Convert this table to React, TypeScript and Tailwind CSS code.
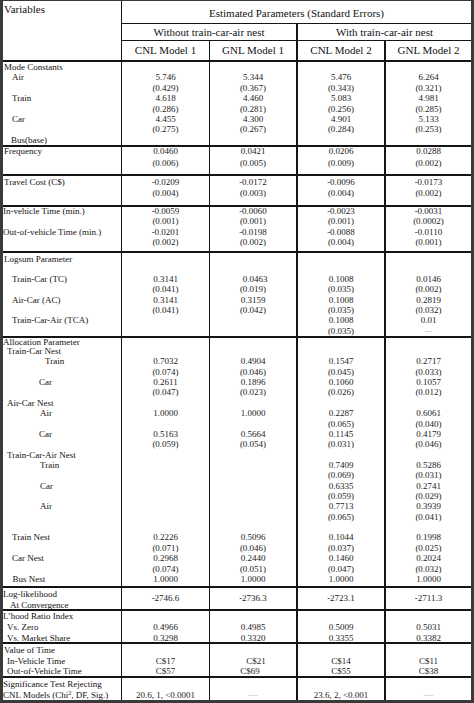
import React from "react";

type R = { h?: string; l?: React.ReactNode; i?: string; v?: React.ReactNode[] };

const cols = "grid grid-cols-[119px_88px_88px_88px_85px]";
const colBorders = [
  "border-r border-[#151515]",
  "border-r border-[#151515]",
  "border-r-2 border-[#151515]",
  "border-r-2 border-[#151515]",
  "",
];

const dash = <span className="text-[#9a9a9a] text-[7px]">----</span>;
const dash3 = <span className="text-[#9a9a9a] text-[7px]">---</span>;

function Section({
  rows,
  h,
  d = "h-[10.4px]",
  top = true,
  mid,
}: {
  rows: R[];
  h: string;
  d?: string;
  top?: boolean;
  mid?: React.ReactNode[];
}) {
  return (
    <div className={`${cols} ${h} ${top ? "border-t-2 border-[#151515]" : ""}`}>
      {[0, 1, 2, 3, 4].map((c) => (
        <div
          key={c}
          className={`${colBorders[c]} flex flex-col overflow-hidden ${mid && c > 0 ? "justify-center" : ""}`}
        >
          {mid && c > 0 ? (
            <div className="text-center text-[#222]">{mid[c - 1]}</div>
          ) : (
            rows.map((r, k) => (
              <div
                key={k}
                className={`${r.h ?? d} flex items-center shrink-0 ${
                  c === 0
                    ? `justify-start whitespace-nowrap text-[#111] ${r.i ?? "pl-[1px]"}`
                    : "justify-center text-[#222]"
                }`}
              >
                {c === 0 ? r.l : r.v?.[c - 1]}
              </div>
            ))
          )}
        </div>
      ))}
    </div>
  );
}

export default function App() {
  return (
    <div className="w-[474px] h-[703px] bg-white border-l-[3px] border-r-[3px] border-t border-b-[3px] border-[#3a3a3a] font-['Liberation_Serif',serif] text-[9px] leading-[10.4px] text-[#111] overflow-hidden">
      {/* Header */}
      <div className={`${cols} grid-rows-[23px_17px_19px] border-b-2 border-[#151515] text-[11px] leading-[13px]`}>
        <div className="row-span-3 border-r border-[#151515] pl-[1px] pt-[2px]">Variables</div>
        <div className="col-span-4 border-b border-[#151515] flex items-center justify-center pt-[3px]">
          Estimated Parameters (Standard Errors)
        </div>
        <div className="col-span-2 border-b border-r-2 border-[#151515] flex items-center justify-center">
          Without train-car-air nest
        </div>
        <div className="col-span-2 border-b border-[#151515] flex items-center justify-center">
          With train-car-air nest
        </div>
        <div className="border-r border-[#151515] flex items-center justify-center">CNL Model 1</div>
        <div className="border-r-2 border-[#151515] flex items-center justify-center">GNL Model 1</div>
        <div className="border-r-2 border-[#151515] flex items-center justify-center">CNL Model 2</div>
        <div className="flex items-center justify-center">GNL Model 2</div>
      </div>

      {/* Mode constants */}
      <Section
        top={false}
        h="h-[83px]"
        rows={[
          { l: "Mode Constants" },
          { l: "Air", i: "pl-[9px]", v: ["5.746", "5.344", "5.476", "6.264"] },
          { v: ["(0.429)", "(0.367)", "(0.343)", "(0.321)"] },
          { l: "Train", i: "pl-[9px]", v: ["4.618", "4.460", "5.083", "4.981"] },
          { v: ["(0.286)", "(0.281)", "(0.256)", "(0.285)"] },
          { l: "Car", i: "pl-[9px]", v: ["4.455", "4.300", "4.901", "5.133"] },
          { v: ["(0.275)", "(0.267)", "(0.284)", "(0.253)"] },
          { l: "Bus(base)", i: "pl-[8px]" },
        ]}
      />

      {/* Frequency */}
      <Section
        h="h-[29px]"
        rows={[
          { h: "h-[8px]", l: "Frequency", v: ["0.0460", "0.0421", "0.0206", "0.0288"] },
          { h: "h-[16px]", v: ["(0.006)", "(0.005)", "(0.009)", "(0.002)"] },
        ]}
      />

      {/* Travel cost */}
      <Section
        h="h-[31px]"
        rows={[
          { h: "h-[11.9px]", l: "Travel Cost (C$)", v: ["-0.0209", "-0.0172", "-0.0096", "-0.0173"] },
          { v: ["(0.004)", "(0.003)", "(0.004)", "(0.002)"] },
        ]}
      />

      {/* Times */}
      <Section
        h="h-[46px]"
        rows={[
          { h: "h-[9px]", l: "In-vehicle Time (min.)", i: "pl-0", v: ["-0.0059", "-0.0060", "-0.0023", "-0.0031"] },
          { v: ["(0.001)", "(0.001)", "(0.001)", "(0.0002)"] },
          { h: "h-[10.8px]", l: "Out-of-vehicle Time (min.)", i: "pl-0", v: ["-0.0201", "-0.0198", "-0.0088", "-0.0110"] },
          { v: ["(0.002)", "(0.002)", "(0.004)", "(0.001)"] },
        ]}
      />

      {/* Logsum */}
      <Section
        h="h-[85px]"
        rows={[
          { h: "h-[13.4px]", l: "Logsum Parameter" },
          { h: "h-[7.5px]" },
          {
            l: "Train-Car (TC)",
            i: "pl-[9px]",
            v: ["0.3141", <span className="pl-[4px]">0.0463</span>, "0.1008", "0.0146"],
          },
          { v: ["(0.041)", "(0.019)", "(0.035)", "(0.002)"] },
          { l: "Air-Car (AC)", i: "pl-[9px]", v: ["0.3141", "0.3159", "0.1008", "0.2819"] },
          { v: ["(0.041)", "(0.042)", "(0.035)", "(0.032)"] },
          { l: "Train-Car-Air (TCA)", i: "pl-[9px]", v: ["", "", "0.1008", "0.01"] },
          { v: ["", "", "(0.035)", dash3] },
        ]}
      />

      {/* Allocation */}
      <Section
        h="h-[250px]"
        d="h-[10.36px]"
        rows={[
          { h: "h-[8px]", l: "Allocation Parameter", i: "pl-0" },
          { l: "Train-Car Nest", i: "pl-[4px]" },
          { l: "Train", i: "pl-[42px]", v: ["0.7032", "0.4904", "0.1547", "0.2717"] },
          { v: ["(0.074)", "(0.046)", "(0.045)", "(0.033)"] },
          { l: "Car", i: "pl-[36px]", v: ["0.2611", "0.1896", "0.1060", "0.1057"] },
          { v: ["(0.047)", "(0.023)", "(0.026)", "(0.012)"] },
          { l: "Air-Car Nest", i: "pl-[4px]" },
          { l: "Air", i: "pl-[37px]", v: ["1.0000", "1.0000", "0.2287", "0.6061"] },
          { v: ["", "", "(0.065)", "(0.040)"] },
          { l: "Car", i: "pl-[36px]", v: ["0.5163", "0.5664", "0.1145", "0.4179"] },
          { v: ["(0.059)", "(0.054)", "(0.031)", "(0.046)"] },
          { l: "Train-Car-Air Nest", i: "pl-[4px]" },
          { l: "Train", i: "pl-[37px]", v: ["", "", "0.7409", "0.5286"] },
          { v: ["", "", "(0.069)", "(0.031)"] },
          { l: "Car", i: "pl-[37px]", v: ["", "", "0.6335", "0.2741"] },
          { v: ["", "", "(0.059)", "(0.029)"] },
          { l: "Air", i: "pl-[37px]", v: ["", "", "0.7713", "0.3939"] },
          { v: ["", "", "(0.065)", "(0.041)"] },
          {},
          { l: "Train Nest", i: "pl-[9px]", v: ["0.2226", "0.5096", "0.1044", "0.1998"] },
          { v: ["(0.071)", "(0.046)", "(0.037)", "(0.025)"] },
          { l: "Car Nest", i: "pl-[9px]", v: ["0.2968", "0.2440", "0.1460", "0.2024"] },
          { v: ["(0.074)", "(0.051)", "(0.047)", "(0.032)"] },
          { l: "Bus Nest", i: "pl-[9.5px]", v: ["1.0000", "1.0000", "1.0000", "1.0000"] },
        ]}
      />

      {/* Log-likelihood */}
      <Section
        h="h-[23px]"
        mid={["-2746.6", "-2736.3", "-2723.1", "-2711.3"]}
        rows={[
          { h: "h-[12px]", l: "Log-likelihood", i: "pl-0" },
          { l: "At Convergence", i: "pl-[7px]" },
        ]}
      />

      {/* L'hood ratio */}
      <Section
        h="h-[33px]"
        rows={[
          { h: "h-[11px]", l: "L\u2019hood Ratio Index", i: "pl-0" },
          { l: "Vs. Zero", i: "pl-[4px]", v: ["0.4966", "0.4985", "0.5009", "0.5031"] },
          { h: "h-[10.8px]", l: "Vs. Market Share", i: "pl-[4px]", v: ["0.3298", "0.3320", "0.3355", "0.3382"] },
        ]}
      />

      {/* Value of time */}
      <Section
        h="h-[34px]"
        rows={[
          { h: "h-[12px]", l: "Value of Time" },
          {
            l: "In-Vehicle Time",
            i: "pl-[4px]",
            v: ["C$17", <span className="pl-[6px]">C$21</span>, "C$14", "C$11"],
          },
          {
            l: "Out-of-Vehicle Time",
            i: "pl-[4px]",
            v: ["C$57", <span className="pr-[6px]">C$69</span>, "C$55", "C$38"],
          },
        ]}
      />

      {/* Significance */}
      <Section
        h="h-[24px]"
        rows={[
          { h: "h-[12px]", l: "Significance Test Rejecting", i: "pl-0" },
          {
            l: (
              <span>
                CNL Models (Chi<sup className="text-[6px]">2</sup>, DF, Sig.)
              </span>
            ),
            i: "pl-0",
            v: ["20.6, 1, <0.0001", dash, "23.6, 2, <0.001", dash],
          },
        ]}
      />
    </div>
  );
}
